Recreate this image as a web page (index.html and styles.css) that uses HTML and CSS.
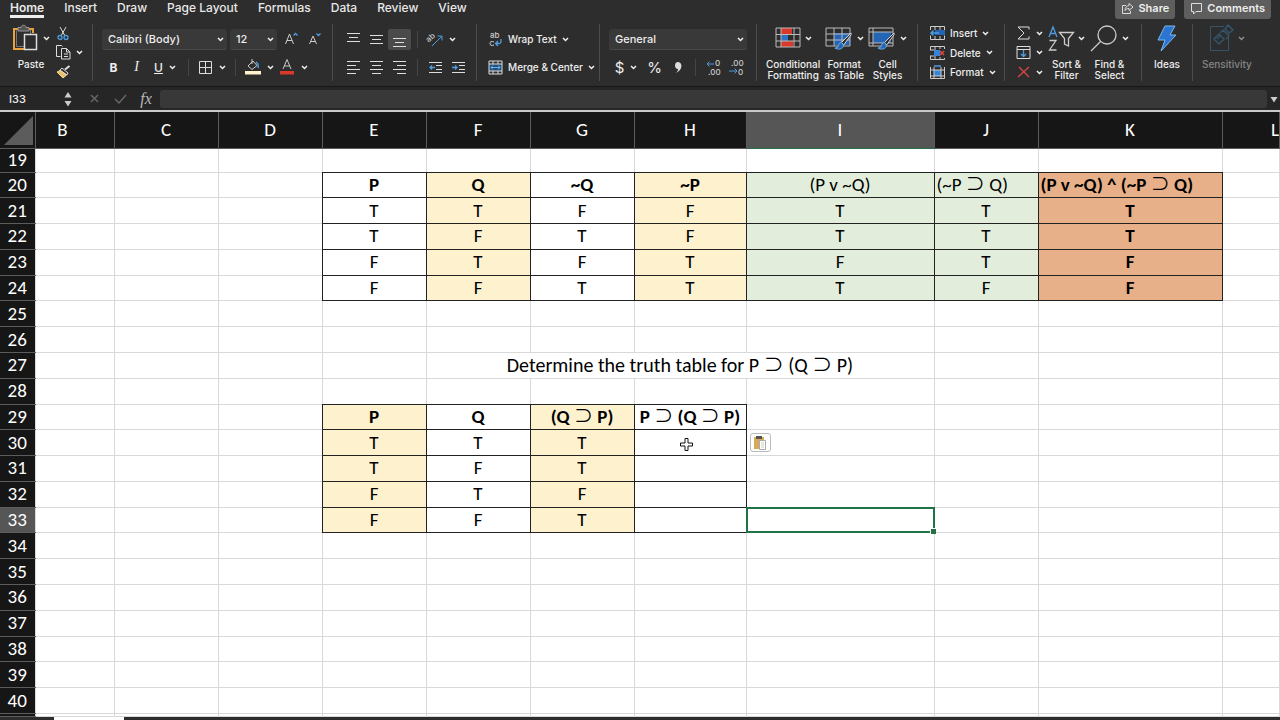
FILE: index.html
```html
<!DOCTYPE html>
<html lang="en">
<head>
    <meta charset="UTF-8">
    <meta name="viewport" content="width=device-width, initial-scale=1.0">
    <title>Truth tables</title>
    <link rel="stylesheet" href="styles.css">
</head>
<body>
    <svg class="defs" aria-hidden="true">
        <symbol id="chev" viewBox="0 0 7 7"><path d="M1 2l2.500 2.500L6 2" fill="none" stroke="#f0f0f0" stroke-width="1.500"/></symbol>
        <symbol id="brush" viewBox="0 0 20 20"><path d="M19 1L9 11l2 3L19 3z" fill="#2d2d2d" stroke="#ddd"/><path d="M9 11c-3 0-3 3-4 5l-3 1c4 2 9 1 9-3z" fill="#2565b5" stroke="#6aaeea"/></symbol>
    </svg>

    <header class="topbar">
        <nav class="tabs">
            <a href="#" class="active">Home</a>
            <a href="#">Insert</a>
            <a href="#">Draw</a>
            <a href="#">Page Layout</a>
            <a href="#">Formulas</a>
            <a href="#">Data</a>
            <a href="#">Review</a>
            <a href="#">View</a>
        </nav>
        <div class="actions">
            <button><svg width="13" height="13" viewBox="0 0 13 13" fill="none" stroke="#ddd"><path d="M5 3.500H1.500v8h8V9M8 1.500l4 3.500-4 3.500v-2c-2 0-3 .5-4 2 0-3 1.500-4.500 4-5z"/></svg>Share</button>
            <button><svg width="13" height="13" viewBox="0 0 13 13" fill="none" stroke="#ddd"><path d="M1.500 1.500h10v8H6l-2.500 2.500V9.500h-2z"/></svg>Comments</button>
        </div>
    </header>

    <div class="ribbon">
        <div class="group clipboard">
            <button class="big">
                <span class="pic"><svg width="27" height="28" viewBox="0 0 27 28" fill="none"><path d="M7 5H2v20H12M16 5h5v4" stroke="#e9a23b" stroke-width="2"/><path d="M4.500 6.500v16H12M18.500 6v4" stroke="#777"/><path d="M6 7V3.500h3c0-3 5-3 5 0h3V7z" fill="#555" stroke="#999"/><rect x="12.500" y="10.500" width="12" height="15" fill="#2d2d2d" stroke="#ddd" stroke-width="1.500"/></svg><svg class="chev"><use href="#chev"/></svg></span>
                Paste
            </button>
            <div class="stack">
                <button aria-label="Cut"><svg width="14" height="15" viewBox="0 0 14 15" fill="none"><path d="M4 1l5 9M10 1L5 10" stroke="#ddd"/><circle cx="4" cy="11.500" r="2" stroke="#4d9de0" stroke-width="1.300"/><circle cx="10" cy="11.500" r="2" stroke="#4d9de0" stroke-width="1.300"/></svg></button>
                <button aria-label="Copy"><svg width="15" height="15" viewBox="0 0 15 15" fill="none" stroke="#ddd"><path d="M4.500 11.500h-4V.5h5l1 1M5.500 3.500h5l3.500 3.500v7H5.500zM10.500 3.500V7H14M8 9h4M8 11.500h4"/></svg><svg class="chev"><use href="#chev"/></svg></button>
                <button aria-label="Format painter"><svg width="15" height="14" viewBox="0 0 15 14"><path d="M13.500 1L9 4.500" stroke="#ddd" stroke-width="2"/><path d="M6 3l6 5-1 2-7-5z" fill="#2d2d2d" stroke="#ddd"/><path d="M4 5.500L1 7l6 6 3.500-3z" fill="#e8bd68" stroke="#f2dca8"/></svg></button>
            </div>
        </div>

        <div class="group rows font">
            <div class="row">
                <label class="select family"><select aria-label="Font"><option>Calibri (Body)</option></select><svg class="chev"><use href="#chev"/></svg></label>
                <label class="select size"><select aria-label="Font size"><option>12</option></select><svg class="chev"><use href="#chev"/></svg></label>
                <button class="tool" aria-label="Increase font size"><svg width="14" height="14" viewBox="0 0 14 14" fill="none"><path d="M.5 12L4.500 2l4 10M2 8.500h5" stroke="#ccc"/><path d="M8.500 3.500L10.500 1.500l2 2" stroke="#4d9de0" stroke-width="1.300"/></svg></button>
                <button class="tool" aria-label="Decrease font size"><svg width="14" height="14" viewBox="0 0 14 14" fill="none"><path d="M1.500 12L5 4l3.500 8M3 9.500h4" stroke="#ccc"/><path d="M8.500 1.500L10.500 3.500l2-2" stroke="#4d9de0" stroke-width="1.300"/></svg></button>
            </div>
            <div class="row">
                <button class="tool bold">B</button>
                <button class="tool italic">I</button>
                <button class="tool drop underline"><span>U</span><svg class="chev"><use href="#chev"/></svg></button>
                <i class="sep"></i>
                <button class="tool drop" aria-label="Borders"><svg width="15" height="15" viewBox="0 0 15 15" fill="none" stroke="#ddd"><path d="M1.500 1.500h12v12h-12zM7.500 1.500v12M1.500 7.500h12"/></svg><svg class="chev"><use href="#chev"/></svg></button>
                <i class="sep"></i>
                <button class="tool drop" aria-label="Fill color"><svg width="16" height="16" viewBox="0 0 16 16" fill="none"><path d="M3 7l5-5 4 4.500-5 4zM7 0v5" stroke="#ccc"/><path d="M11 3q3 2 2 6" stroke="#4d9de0" stroke-width="1.500"/><path d="M0 12h16v3.500H0z" fill="#fff2cc"/></svg><svg class="chev"><use href="#chev"/></svg></button>
                <button class="tool drop" aria-label="Font color"><svg width="16" height="16" viewBox="0 0 16 16" fill="none"><path d="M4 10l4-9.500L12 10M5.500 7h5" stroke="#ccc"/><path d="M1 12h14v3.500H1z" fill="#d8392b"/></svg><svg class="chev"><use href="#chev"/></svg></button>
            </div>
        </div>

        <div class="group rows align">
            <div class="row">
                <button class="tool" aria-label="Top align"><svg width="13" height="15" viewBox="0 0 13 15" stroke="#ddd"><path d="M0 1.500h13M2 5.500h9M0 9.500h13"/></svg></button>
                <button class="tool" aria-label="Middle align"><svg width="13" height="15" viewBox="0 0 13 15" stroke="#ddd"><path d="M0 3.500h13M2 7.500h9M0 11.500h13"/></svg></button>
                <button class="tool on" aria-label="Bottom align"><svg width="13" height="15" viewBox="0 0 13 15" stroke="#ddd"><path d="M0 6.500h13M2 10.500h9M0 14.500h13"/></svg></button>
                <i class="sep"></i>
                <button class="tool drop" aria-label="Orientation"><svg width="16" height="16" viewBox="0 0 16 16" fill="none"><path d="M5 15L15 5M10.500 5H15v4.500" stroke="#4d9de0"/><text class="tiny" x="-1" y="9" transform="rotate(-42 4 7)">ab</text></svg><svg class="chev"><use href="#chev"/></svg></button>
            </div>
            <div class="row">
                <button class="tool" aria-label="Align left"><svg width="13" height="13" viewBox="0 0 13 13" stroke="#ddd"><path d="M0 .5h13M0 4.500h9M0 8.500h13M0 12.500h9"/></svg></button>
                <button class="tool" aria-label="Center"><svg width="13" height="13" viewBox="0 0 13 13" stroke="#ddd"><path d="M0 .5h13M2 4.500h9M0 8.500h13M2 12.500h9"/></svg></button>
                <button class="tool" aria-label="Align right"><svg width="13" height="13" viewBox="0 0 13 13" stroke="#ddd"><path d="M0 .5h13M4 4.500h9M0 8.500h13M4 12.500h9"/></svg></button>
                <i class="sep"></i>
                <button class="tool" aria-label="Decrease indent"><svg width="13" height="13" viewBox="0 0 13 13" fill="none" stroke="#ddd"><path d="M0 1.500h13M7 4.500h6M7 8.500h6M0 11.500h13"/><path d="M6 6.500H1M3 4.500l-2 2 2 2" stroke="#4d9de0" stroke-width="1.300"/></svg></button>
                <button class="tool" aria-label="Increase indent"><svg width="13" height="13" viewBox="0 0 13 13" fill="none" stroke="#ddd"><path d="M0 1.500h13M7 4.500h6M7 8.500h6M0 11.500h13"/><path d="M0 6.500h5M3 4.500l2 2-2 2" stroke="#4d9de0" stroke-width="1.300"/></svg></button>
            </div>
        </div>

        <div class="group rows wrap">
            <button class="text"><svg width="15" height="16" viewBox="0 0 15 16" fill="none"><text class="tiny" x="2" y="7">ab</text><path d="M6 11q-4-1.500-4 1.500t4 1.500" stroke="#ccc"/><path d="M13 8v3q0 1.500-2 1.500H8M10 10l-2.500 2.500L10 15" stroke="#4d9de0" stroke-width="1.300"/></svg>Wrap Text<svg class="chev"><use href="#chev"/></svg></button>
            <button class="text"><svg width="15" height="15" viewBox="0 0 15 15" fill="none"><path d="M1 4h13v7H1z" fill="#1f4d78"/><path d="M1 1h13v13H1zM1 4h13M1 11h13M5 1v3M10 1v3M5 11v3M10 11v3" stroke="#ddd"/><path d="M3 7.500h9M5 5.500l-2 2 2 2M10 5.500l2 2-2 2" stroke="#6db5f0"/></svg>Merge &amp; Center<svg class="chev"><use href="#chev"/></svg></button>
        </div>

        <div class="group rows number">
            <div class="row"><label class="select format"><select aria-label="Number format"><option>General</option></select><svg class="chev"><use href="#chev"/></svg></label></div>
            <div class="row">
                <button class="tool drop symbol"><span>$</span><svg class="chev"><use href="#chev"/></svg></button>
                <button class="tool symbol">%</button>
                <button class="tool" aria-label="Comma style"><svg width="8" height="13" viewBox="0 0 8 13"><path d="M1 12c3-1 3-3 3-4C0 8 0 1 4 1c5 0 5 9-3 11z" fill="#ddd"/></svg></button>
                <i class="sep"></i>
                <button class="tool" aria-label="Increase decimal"><svg width="15" height="15" viewBox="0 0 15 15" fill="none"><text class="tiny" x="9" y="6">0</text><text class="tiny" x="2" y="15">.00</text><path d="M8 4H1M3.500 1.500L1 4l2.500 2.500" stroke="#4d9de0"/></svg></button>
                <button class="tool" aria-label="Decrease decimal"><svg width="15" height="15" viewBox="0 0 15 15" fill="none"><text class="tiny" x="2" y="6">.00</text><text class="tiny" x="9" y="15">0</text><path d="M0 11h8M5.500 8.500L8 11l-2.500 2.500" stroke="#4d9de0"/></svg></button>
            </div>
        </div>

        <div class="group styles">
            <button class="big">
                <span class="pic"><svg width="26" height="22" viewBox="0 0 26 22" fill="none"><path d="M6 1h11v6H6zM6 14h12v6H6z" fill="#d8392b"/><path d="M6 7h7v7H6z" fill="#2c72c7"/><path d="M1 1h24v19H1zM1 7.500h24M1 14h24M6 1v19M19 1v19" stroke="#bbb"/></svg><svg class="chev"><use href="#chev"/></svg></span>
                Conditional<br>Formatting
            </button>
            <button class="big">
                <span class="pic"><svg width="28" height="26" viewBox="0 0 28 26" fill="none"><path d="M9 8h16v12H9z" fill="#2565b5"/><path d="M1 3h24v18H1zM1 9h24M1 15h24M9 3v18M17 3v18" stroke="#bbb"/><use href="#brush" x="8" y="7" width="19" height="19"/></svg><svg class="chev"><use href="#chev"/></svg></span>
                Format<br>as Table
            </button>
            <button class="big">
                <span class="pic"><svg width="28" height="26" viewBox="0 0 28 26" fill="none"><path d="M5 7h18v11H5z" fill="#2565b5"/><path d="M1 3h24v18H1zM1 7h24M5 3v18M1 18h24" stroke="#bbb"/><use href="#brush" x="8" y="7" width="19" height="19"/></svg><svg class="chev"><use href="#chev"/></svg></span>
                Cell<br>Styles
            </button>
        </div>

        <div class="group cells">
            <div class="stack">
                <button class="text"><svg width="15" height="14" viewBox="0 0 15 14" fill="none"><path d="M5 4h10v5H5z" fill="#2565b5"/><path d="M.5 4V.5h14V4M.5 9.500v4h14v-4M5 .5V4M10 .5V4M5 10v3M10 10v3" stroke="#ccc"/><path d="M9 7H1M3.500 4.500L1 7l2.500 2.500" stroke="#4d9de0" stroke-width="1.500"/></svg>Insert<svg class="chev"><use href="#chev"/></svg></button>
                <button class="text"><svg width="15" height="14" viewBox="0 0 15 14" fill="none"><path d="M4 4h6v6H4z" fill="#3484dc"/><path d="M.5 4V.5h14V3M.5 10v3.500h14V12M5 .5V4M10 .5V3M5 10v3M10 11v2M0 4h4M0 10h4" stroke="#ccc"/><path d="M10 5l4 4M14 5l-4 4" stroke="#e24a40" stroke-width="1.500"/></svg>Delete<svg class="chev"><use href="#chev"/></svg></button>
                <button class="text"><svg width="15" height="14" viewBox="0 0 15 14" fill="none"><path d="M4 5h7v6H4z" fill="#3484dc"/><path d="M.5 2v11.500h14V2M4 2v11M11 2v11M.5 5h14M.5 11h14" stroke="#ccc"/><path d="M4 1h7" stroke="#4d9de0" stroke-width="1.500"/></svg>Format<svg class="chev"><use href="#chev"/></svg></button>
            </div>
        </div>

        <div class="group editing">
            <div class="stack">
                <button aria-label="AutoSum"><svg width="15" height="14" viewBox="0 0 15 14" fill="none" stroke="#ddd"><path d="M13 3.500V1H2l6 6-6 6h11v-2.500"/></svg><svg class="chev"><use href="#chev"/></svg></button>
                <button aria-label="Fill"><svg width="15" height="13" viewBox="0 0 15 13" fill="none"><path d="M1 .5h13v12H1zM1 3.500h13" stroke="#ddd"/><path d="M7.500 4v7M5 8l2.500 2.500L10 8" stroke="#4d9de0" stroke-width="1.300"/></svg><svg class="chev"><use href="#chev"/></svg></button>
                <button aria-label="Clear"><svg width="15" height="12" viewBox="0 0 15 12" stroke="#d9483f" stroke-width="1.300"><path d="M3 1l10 10M13 1L2 11"/></svg><svg class="chev"><use href="#chev"/></svg></button>
            </div>
            <button class="big">
                <span class="pic"><svg width="26" height="26" viewBox="0 0 26 26" fill="none"><path d="M1 12L5 2l4 10M2.500 8.500h5" stroke="#4d9de0" stroke-width="1.300"/><path d="M1.500 15.500H8L1.500 25H8.500" stroke="#ccc" stroke-width="1.300"/><path d="M11.500 7.500h14l-5 6V21l-4-2v-5.500z" stroke="#ccc" stroke-width="1.300"/></svg><svg class="chev"><use href="#chev"/></svg></span>
                Sort &amp;<br>Filter
            </button>
            <button class="big">
                <span class="pic"><svg width="28" height="28" viewBox="0 0 28 28" fill="none" stroke="#ccc" stroke-width="1.300"><circle cx="17" cy="11" r="9"/><path d="M10.500 17.500L1 27"/></svg><svg class="chev"><use href="#chev"/></svg></span>
                Find &amp;<br>Select
            </button>
        </div>

        <div class="group ideas">
            <button class="big"><span class="pic"><svg width="20" height="27" viewBox="0 0 20 27"><path d="M8 1h10l-5 9h6L4 26l4-11H1z" fill="#2b74cf" stroke="#7db8ee"/></svg></span>Ideas</button>
        </div>
        <div class="group sensitivity">
            <button class="big" disabled><span class="pic"><svg width="25" height="28" viewBox="0 0 25 28" fill="none" stroke="#34546a"><path d="M15 2.500H1.500v24h18V13"/><path d="M5 15l5-5 5 5-5 5zM8 15l3-3M11 9l3-3 6 6-3 3M16 5l3-4 5 5-4 3z" stroke-width="1.500"/></svg><svg class="chev"><use href="#chev"/></svg></span>Sensitivity</button>
        </div>
    </div>

    <div class="formula-bar">
        <input class="name-box" type="text" value="I33" aria-label="Name box">
        <button class="spin" aria-label="Defined names"><svg width="8" height="16" viewBox="0 0 8 16" fill="#ccc"><path d="M.5 6.500L4 1l3.500 5.500zM.5 10L4 15.500 7.500 10z"/></svg></button>
        <button class="fbtn" aria-label="Cancel"><svg width="9" height="9" viewBox="0 0 9 9" stroke="#666" stroke-width="1.500"><path d="M1 1l7 7M8 1L1 8"/></svg></button>
        <button class="fbtn" aria-label="Enter"><svg width="13" height="10" viewBox="0 0 13 10" fill="none" stroke="#666" stroke-width="1.500"><path d="M1 5l4 4 7-8"/></svg></button>
        <button class="fbtn fx">fx</button>
        <input class="formula" type="text" aria-label="Formula">
        <button class="expand" aria-label="Expand formula bar"><svg width="8" height="7" viewBox="0 0 8 7" fill="#ccc"><path d="M.5 1h7L4 6.500z"/></svg></button>
    </div>

    <main class="sheet">
        <table>
            <colgroup id="cols"></colgroup>
            <thead><tr id="letters"></tr></thead>
            <tbody id="cells"></tbody>
        </table>
    </main>
    <footer class="sheet-tabs"><span></span></footer>

    <script src="script.js"></script>
</body>
</html>
```

FILE: styles.css
```css
* {
    box-sizing: border-box;
}
body {
    margin: 0;
    height: 100vh;
    display: flex;
    flex-direction: column;
    overflow: hidden;
    background: #2d2d2d;
    color: #eee;
    font-family: Inter, "Liberation Sans", sans-serif;
    font-size: 10px;
    font-weight: 500;
}
button, input, select {
    font: inherit;
    color: inherit;
    background: none;
    border: none;
    padding: 0;
    margin: 0;
}
svg {
    flex: none;
    overflow: visible;
}
.defs {
    position: absolute;
    width: 0;
    height: 0;
}
.chev {
    width: 7px;
    height: 7px;
}
.tiny {
    font-size: 8px;
    fill: #ccc;
}

/* tabs */
.topbar {
    display: flex;
    justify-content: space-between;
    height: 19px;
    padding: 0 9px 0 10px;
}
.tabs {
    display: flex;
    gap: 20px;
}
.tabs a {
    height: 18px;
    line-height: 15px;
    font-size: 12px;
    color: #e8e8e8;
    text-decoration: none;
}
.tabs .active {
    font-weight: 600;
    border-bottom: 3px solid #eee;
}
.actions {
    display: flex;
    gap: 9px;
}
.actions button {
    display: flex;
    align-items: center;
    gap: 4px;
    padding: 0 6px 3px;
    background: #5e5e5e;
    border-radius: 0 0 3px 3px;
    font-size: 11px;
    font-weight: 600;
}

/* ribbon */
.ribbon {
    display: grid;
    grid-template-columns: 93fr 240fr 144fr 123fr 157fr 161fr 87fr 137fr 51fr 87fr;
    height: 68px;
    padding: 5px 0 8px;
    border-bottom: 1px solid #161616;
}
.group {
    display: flex;
    min-width: 0;
    padding-left: 9px;
    border-right: 1px solid #4c4c4c;
    white-space: nowrap;
}
.group:last-child {
    border: none;
}
.rows {
    flex-direction: column;
    gap: 4px;
    padding-top: 3px;
}
.row {
    display: flex;
    align-items: center;
    height: 24px;
}
.big {
    display: flex;
    flex-direction: column;
    align-items: center;
    line-height: 11px;
    text-align: center;
}
.pic {
    display: flex;
    align-items: center;
    gap: 4px;
    height: 28px;
    margin-bottom: 7px;
}
.stack {
    display: flex;
    flex-direction: column;
    justify-content: space-between;
}
.stack button {
    display: flex;
    align-items: center;
    gap: 5px;
    height: 18px;
}
.clipboard {
    gap: 6px;
    padding-left: 12px;
}
.tool {
    display: flex;
    align-items: center;
    justify-content: center;
    width: 23px;
    height: 21px;
    font-size: 12px;
}
.tool.drop {
    width: 34px;
    gap: 6px;
}
.tool.on {
    background: #4a4a4a;
    border-radius: 2px;
}
.sep {
    width: 1px;
    height: 17px;
    margin: 0 6px;
    background: #454545;
}
.bold {
    font-weight: 700;
}
.italic {
    font-family: "Liberation Serif", serif;
    font-style: italic;
    font-size: 14px;
}
.underline span {
    text-decoration: underline;
}
.symbol {
    font-size: 15px;
    font-weight: 400;
}
.select {
    position: relative;
    height: 21px;
}
.select select {
    width: 100%;
    height: 100%;
    padding-left: 6px;
    appearance: none;
    background: #393939;
    border-bottom: 1px solid #4a4a4a;
    border-radius: 3px;
    font-size: 11px;
}
.select .chev {
    position: absolute;
    right: 3px;
    top: 7px;
}
.family {
    width: 125px;
    margin-right: 3px;
}
.size {
    width: 47px;
    margin-right: 3px;
}
.format {
    width: 138px;
}
.text {
    display: flex;
    align-items: center;
    gap: 5px;
    height: 24px;
}
.wrap {
    padding-left: 11px;
}
.styles {
    gap: 4px;
    padding-left: 9px;
}
.cells {
    padding-left: 12px;
}
.editing {
    gap: 5px;
    padding-left: 11px;
}
.ideas {
    justify-content: center;
    padding: 0;
}
.sensitivity .big {
    color: #858585;
}
.sensitivity .chev {
    opacity: 0.5;
}

/* formula bar */
.formula-bar {
    display: flex;
    align-items: center;
    height: 25px;
    border-bottom: 2px solid #c9c9c9;
    background: #262626;
}
.name-box {
    width: 62px;
    padding-left: 9px;
    font-size: 11px;
}
.spin {
    width: 12px;
    margin-right: 7px;
}
.spin svg {
    display: block;
    margin: auto;
}
.fbtn {
    display: flex;
    justify-content: center;
    width: 26px;
}
.fx {
    font-family: "Liberation Serif", serif;
    font-style: italic;
    font-size: 16px;
    color: #bbb;
}
.formula {
    flex: 1;
    height: 18px;
    margin-left: 1px;
    padding: 0 6px;
    background: #383838;
    border-radius: 3px;
}
.expand {
    width: 13px;
}

/* sheet */
.sheet {
    flex: 1;
    min-height: 0;
    background: #fff;
}
table {
    width: 100%;
    height: 100%;
    table-layout: fixed;
    border-collapse: collapse;
    font-family: Carlito, Lato, "Noto Sans", sans-serif;
    font-size: 19px;
    font-weight: 400;
    line-height: 22px;
    color: #000;
}
col {
    border-right: 1px solid #d9d9d9;
}
tbody tr {
    border-bottom: 1px solid #d9d9d9;
}
th, td {
    padding: 0;
    text-align: center;
    white-space: nowrap;
}
thead tr {
    height: 36px;
}
thead th {
    background: #161616;
    color: #fff;
    font-weight: 400;
    border: 1px solid #5c5c5c;
    border-width: 0 1px 1px 0;
}
thead .first {
    padding-right: 24px;
}
thead .last {
    text-align: right;
}
thead .current {
    background: #565656;
    border-bottom-color: #217346;
}
.corner svg {
    display: block;
    margin: 2px 2px 0 auto;
}
tbody th {
    background: #161616;
    color: #fff;
    font-weight: 400;
    border-bottom: 1px solid #5c5c5c;
}
tbody .current {
    background: #565656;
}
.short {
    height: 24px;
}
.cut {
    height: 3px;
    line-height: 0;
}
.boxed {
    border: 1px solid #222;
}
.title {
    font-size: 20px;
}
.left {
    text-align: left;
    padding-left: 2px;
}
.strong {
    font-weight: 700;
}
.symbol-sup {
    font-family: "Noto Sans CJK JP", sans-serif;
    font-weight: 400;
    line-height: 0;
}
.yellow {
    background: #fdf1ce;
}
.green {
    background: #e2eedb;
}
.orange {
    background: #e8b088;
}
.selected, .anchor {
    position: relative;
}
.selected::before {
    content: "";
    position: absolute;
    inset: -1px;
    border: 2px solid #217346;
}
.selected::after {
    content: "";
    position: absolute;
    right: -2px;
    bottom: -2px;
    width: 5px;
    height: 5px;
    background: #217346;
    border: 1px solid #fff;
    border-width: 1px 0 0 1px;
}
.paste-options {
    position: absolute;
    left: 3px;
    top: 3px;
    width: 21px;
    height: 19px;
    display: flex;
    align-items: center;
    justify-content: center;
    background: #fff;
    border: 1px solid #bbb;
    border-radius: 3px;
}
.pointer {
    position: absolute;
    left: 45px;
    top: 8px;
}
.sheet-tabs {
    height: 3px;
    padding-left: 54px;
    background: #2d2d2d;
}
.sheet-tabs span {
    display: block;
    width: 70px;
    height: 3px;
    background: #fff;
}
```

FILE: script.js
```javascript
const letters = ['B', 'C', 'D', 'E', 'F', 'G', 'H', 'I', 'J', 'K', 'L'];
const widths = [35, 79, 104, 104, 104, 104, 104, 112, 188, 104, 184];

// values start at column E
const values = {
    20: ['P', 'Q', '~Q', '~P', '(P v ~Q)', '(~P ⊃ Q)', '(P v ~Q) ^ (~P ⊃ Q)'],
    21: ['T', 'T', 'F', 'F', 'T', 'T', 'T'],
    22: ['T', 'F', 'T', 'F', 'T', 'T', 'T'],
    23: ['F', 'T', 'F', 'T', 'F', 'T', 'F'],
    24: ['F', 'F', 'T', 'T', 'T', 'F', 'F'],
    29: ['P', 'Q', '(Q ⊃ P)', 'P ⊃ (Q ⊃ P)'],
    30: ['T', 'T', 'T', ''],
    31: ['T', 'F', 'T', ''],
    32: ['F', 'T', 'F', ''],
    33: ['F', 'F', 'T', '']
};
const topFill = ['', 'yellow', '', 'yellow', 'green', 'green', 'orange'];
const bottomFill = ['yellow', '', 'yellow', ''];

const pasteIcon = '<button class="paste-options" aria-label="Paste options"><svg width="14" height="16" viewBox="0 0 14 16"><path d="M1 2h10v12H1z" fill="#d9a95b"/><path d="M3 1h6v3H3z" fill="#555"/><path d="M6.500 5.500h6v9h-6z" fill="#fff" stroke="#aaa"/><path d="M8 8h3M8 10h3M8 12h3" stroke="#ccc"/></svg></button>';
const pointer = '<svg class="pointer" width="13" height="13" viewBox="0 0 13 13"><path d="M5 .5h3V5h4.500v3H8v4.500H5V8H.5V5H5z" fill="#fff" stroke="#111"/></svg>';

// the horseshoe is drawn in a wider, thinner face
function formula(text) {
    return text.replaceAll('⊃', '<span class="symbol-sup">⊃</span>');
}

let cols = '';
widths.forEach(w => cols += `<col style="width: ${w}px">`);
document.getElementById('cols').innerHTML = cols + '<col>';

let head = '<th class="corner"><svg width="29" height="29" viewBox="0 0 29 29"><path d="M29 0v29H0z" fill="#5c5c5c"/></svg></th>';
letters.forEach(l => {
    const cls = l === 'B' ? 'first' : l === 'I' ? 'current' : l === 'L' ? 'last' : '';
    head += `<th class="${cls}">${l}</th>`;
});
document.getElementById('letters').innerHTML = head;

let body = '';
for (let r = 19; r <= 41; r++) {
    const rowClass = r === 19 ? 'short' : r === 41 ? 'cut' : '';
    body += `<tr class="${rowClass}"><th class="${r === 33 ? 'current' : ''}">${r === 41 ? '' : r}</th>`;
    for (let c = 0; c < letters.length; c++) {
        if (r === 27 && c === 4) {
            body += `<td class="title" colspan="4">${formula('Determine the truth table for P ⊃ (Q ⊃ P)')}</td>`;
            c += 3;
            continue;
        }
        const i = c - 3;
        const row = values[r];
        const cls = [];
        let text = '';
        if (row && i >= 0 && i < row.length) {
            text = formula(row[i]);
            cls.push('boxed', r < 25 ? topFill[i] : bottomFill[i]);
            if (i === 6 || r === 29 || (r === 20 && i < 4)) cls.push('strong');
            if (r === 20 && i > 4) cls.push('left');
        }
        if (r === 30 && letters[c] === 'H') { cls.push('anchor'); text = pointer; }
        if (r === 30 && letters[c] === 'I') { cls.push('anchor'); text = pasteIcon; }
        if (r === 33 && letters[c] === 'I') cls.push('selected');
        body += `<td class="${cls.join(' ')}">${text}</td>`;
    }
    body += '</tr>';
}
document.getElementById('cells').innerHTML = body;
```
